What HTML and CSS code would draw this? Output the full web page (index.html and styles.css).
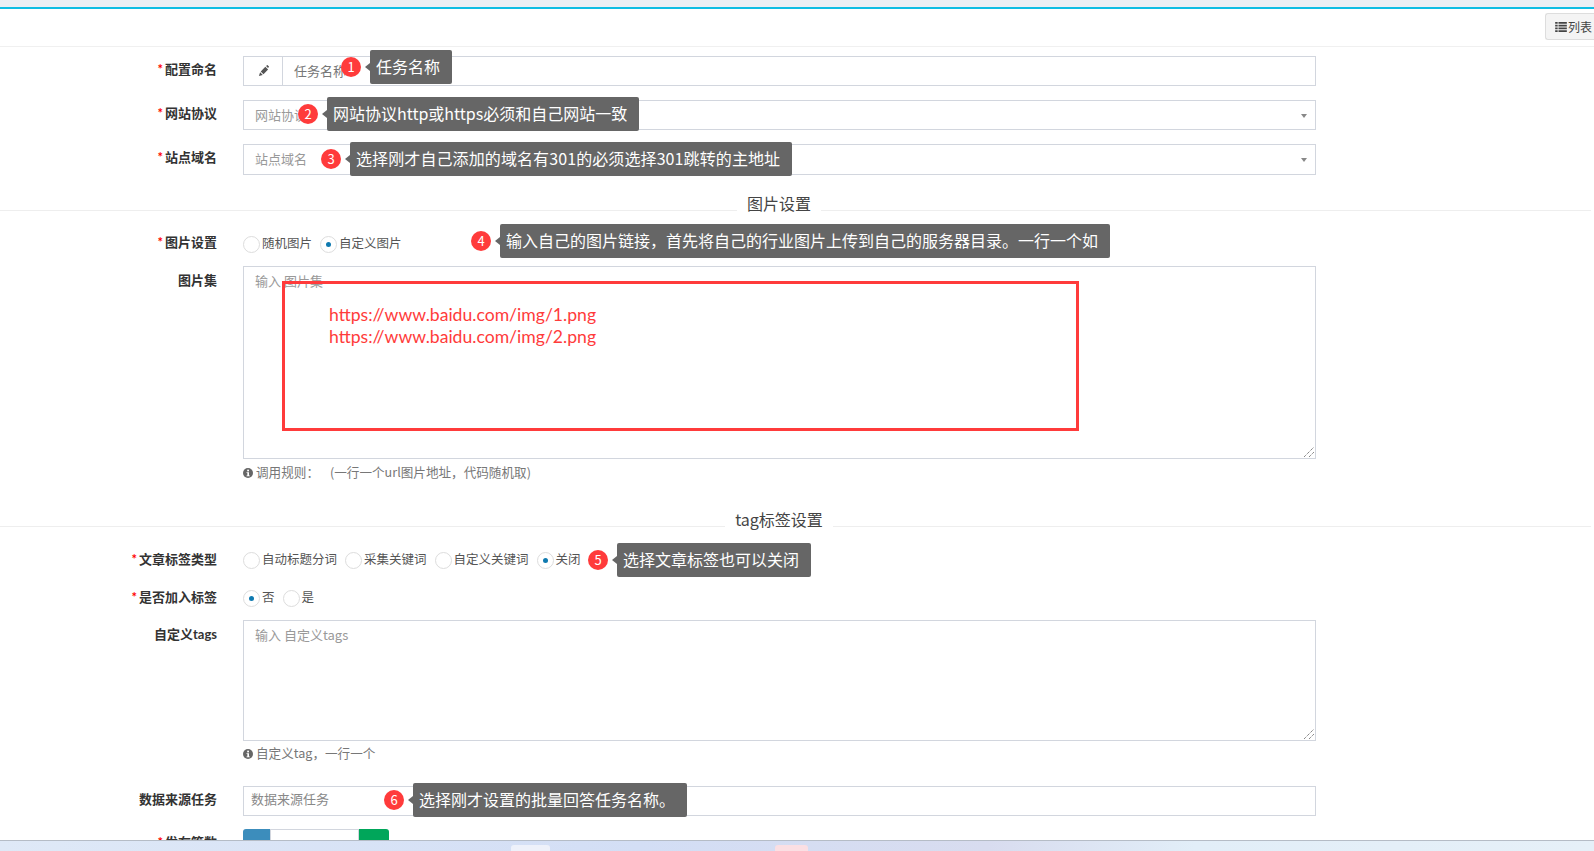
FILE: index.html
```html
<!DOCTYPE html>
<html lang="zh-CN">
  <head>
    <meta charset="UTF-8" />
    <title>任务配置</title>
    <link rel="stylesheet" href="styles.css">
  </head>
  <body>
    <div class="top-strip"></div>
    <div class="toolbar">
      <a class="btn-list">
        <svg class="ico" viewBox="0 0 14 12" width="12" height="10"><path d="M0 0h3v2H0zM4 0h10v2H4zM0 3.3h3v2H0zM4 3.3h10v2H4zM0 6.6h3v2H0zM4 6.6h10v2H4zM0 9.9h3v2H0zM4 9.9h10v2H4z" fill="#444"/></svg>列表
      </a>
    </div>

    <form class="form">
      <div class="row row-a">
        <label class="lbl"><i>*</i>配置命名</label>
        <div class="field input-group">
          <span class="addon">
            <svg viewBox="0 0 12 12" width="11" height="11"><path d="M3 7l5-5 3 3-5 5zM2.3 7.9l2.9 2.9L1 12zM8.8 1.2l1-1q.4-.3.8 0l1.3 1.3q.3.4 0 .8l-1 1z" fill="#555"/></svg>
          </span>
          <span class="ph dark">任务名称</span>
        </div>
        <div class="note note-1"><b class="num">1</b><span class="tip">任务名称</span></div>
      </div>

      <div class="row row-b">
        <label class="lbl"><i>*</i>网站协议</label>
        <div class="field select"><span class="ph">网站协议</span><s class="caret"></s></div>
        <div class="note note-2"><b class="num">2</b><span class="tip">网站协议http或https必须和自己网站一致</span></div>
      </div>

      <div class="row row-c">
        <label class="lbl"><i>*</i>站点域名</label>
        <div class="field select"><span class="ph">站点域名</span><s class="caret"></s></div>
        <div class="note note-3"><b class="num">3</b><span class="tip">选择刚才自己添加的域名有301的必须选择301跳转的主地址</span></div>
      </div>

      <div class="section sec-img"><span>图片设置</span></div>

      <div class="row row-radio">
        <label class="lbl"><i>*</i>图片设置</label>
        <div class="radios">
          <span class="radio"></span><span class="opt">随机图片</span>
          <span class="radio on"></span><span class="opt">自定义图片</span>
        </div>
        <div class="note note-4"><b class="num">4</b><span class="tip">输入自己的图片链接，首先将自己的行业图片上传到自己的服务器目录。一行一个如</span></div>
      </div>

      <div class="row row-area">
        <label class="lbl">图片集</label>
        <div class="stack">
          <div class="field area area-img">
            <span class="ph">输入 图片集</span>
            <span class="grip"><svg viewBox="0 0 10 10" width="10" height="10"><path d="M0 10L10 0M5 10l5-5" stroke="#555" stroke-dasharray="1 1" fill="none"/></svg></span>
          </div>
          <p class="help">
            <svg class="info" viewBox="0 0 12 12" width="10" height="10"><circle cx="6" cy="6" r="6" fill="#666"/><rect x="5" y="2" width="2.2" height="2" fill="#fff"/><path d="M4.2 5h3v4h1v1H4.2V9h1V6h-1z" fill="#fff"/></svg>调用规则：<span class="help-gap">(一行一个url图片地址，代码随机取)</span>
          </p>
        </div>
        <div class="redbox">
          <div>https://www.baidu.com/img/1.png</div>
          <div>https://www.baidu.com/img/2.png</div>
        </div>
      </div>

      <div class="section sec-tag"><span>tag标签设置</span></div>

      <div class="row row-radio2">
        <label class="lbl"><i>*</i>文章标签类型</label>
        <div class="radios">
          <span class="radio"></span><span class="opt">自动标题分词</span>
          <span class="radio"></span><span class="opt">采集关键词</span>
          <span class="radio"></span><span class="opt">自定义关键词</span>
          <span class="radio on"></span><span class="opt">关闭</span>
        </div>
        <div class="note note-5"><b class="num">5</b><span class="tip">选择文章标签也可以关闭</span></div>
      </div>

      <div class="row row-radio3">
        <label class="lbl"><i>*</i>是否加入标签</label>
        <div class="radios">
          <span class="radio on"></span><span class="opt">否</span>
          <span class="radio"></span><span class="opt">是</span>
        </div>
      </div>

      <div class="row row-area2">
        <label class="lbl">自定义tags</label>
        <div class="stack">
          <div class="field area area-tags">
            <span class="ph">输入 自定义tags</span>
            <span class="grip"><svg viewBox="0 0 10 10" width="10" height="10"><path d="M0 10L10 0M5 10l5-5" stroke="#555" stroke-dasharray="1 1" fill="none"/></svg></span>
          </div>
          <p class="help">
            <svg class="info" viewBox="0 0 12 12" width="10" height="10"><circle cx="6" cy="6" r="6" fill="#666"/><rect x="5" y="2" width="2.2" height="2" fill="#fff"/><path d="M4.2 5h3v4h1v1H4.2V9h1V6h-1z" fill="#fff"/></svg>自定义tag，一行一个
          </p>
        </div>
      </div>

      <div class="row row-d">
        <label class="lbl">数据来源任务</label>
        <div class="field plain"><span class="ph mid">数据来源任务</span></div>
        <div class="note note-6"><b class="num">6</b><span class="tip">选择刚才设置的批量回答任务名称。</span></div>
      </div>

      <div class="row row-e">
        <label class="lbl"><i>*</i>发布篇数</label>
        <div class="spinner"><span class="sp-l"></span><span class="sp-m"></span><span class="sp-r"></span></div>
      </div>
    </form>

    <div class="taskbar"><span class="tb-a"></span><span class="tb-b"></span></div>
  </body>
</html>
```

FILE: styles.css
```css
* {
  box-sizing: border-box;
}

html,
body {
  height: 851px;
  overflow: hidden;
}

body {
  margin: 0;
  position: relative;
  background: #fff;
  color: #333;
  font-family: "Noto Sans CJK SC", "Noto Sans", sans-serif;
  font-size: 13px;
}

.top-strip {
  height: 9px;
  background: #eceff4;
  border-bottom: 2px solid #10bde3;
}

.toolbar {
  height: 38px;
  display: flex;
  justify-content: flex-end;
  padding-top: 4px;
  border-bottom: 1px solid #f0f0f0;
}

.btn-list {
  width: 49px;
  height: 27px;
  display: flex;
  align-items: center;
  gap: 1px;
  padding-left: 9px;
  background: #f4f4f4;
  border: 1px solid #ddd;
  border-right: none;
  border-radius: 3px 0 0 3px;
  color: #444;
  font-size: 12px;
  white-space: nowrap;
}

/* form rows */
.form {
  padding-top: 9px;
}

.row {
  display: flex;
  position: relative;
  align-items: flex-start;
}

.lbl {
  width: 217px;
  margin-right: 26px;
  flex: none;
  text-align: right;
  font-family: Lato, "Noto Sans CJK SC", sans-serif;
  font-weight: 700;
  color: #333;
  line-height: 26px;
}

.lbl i {
  color: #f00;
  font-style: normal;
  margin-right: 2px;
}

.field {
  width: 1073px;
  height: 30px;
  position: relative;
  display: flex;
  align-items: center;
  border: 1px solid #d2d6de;
  background: #fff;
}

.ph {
  padding-left: 11px;
  padding-bottom: 2px;
  color: #999;
  white-space: nowrap;
}

.ph.dark {
  color: #777;
}

.ph.mid {
  padding-left: 7px;
  padding-bottom: 5px;
  color: #888;
}

.addon {
  width: 39px;
  height: 100%;
  padding-bottom: 2px;
  display: flex;
  align-items: center;
  justify-content: center;
  border-right: 1px solid #d2d6de;
}

.caret {
  position: absolute;
  right: 8px;
  top: 13px;
  border-top: 4px solid #888;
  border-left: 3px solid transparent;
  border-right: 3px solid transparent;
}

.row-a,
.row-b {
  height: 44px;
}

.row-c {
  height: 31px;
}

.row-c .field {
  height: 31px;
}

/* section titles */
.section {
  height: 1px;
  margin-right: 3px;
  padding-right: 33px;
  background: #eee;
  display: flex;
  justify-content: center;
  align-items: flex-start;
}

.section span {
  flex: none;
  height: 24px;
  margin-top: -19px;
  padding: 0 10px;
  background: #fff;
  line-height: 24px;
  font-size: 16px;
  color: #444;
}

.sec-img {
  margin-top: 35px;
  margin-bottom: 18px;
}

.sec-tag {
  margin-bottom: 21px;
}

/* radios */
.radios {
  display: flex;
  align-items: center;
  height: 24px;
}

.radio {
  width: 17px;
  height: 17px;
  margin-top: 3px;
  flex: none;
  border: 1px solid #ddd;
  border-radius: 50%;
  background: #fff;
  position: relative;
}

.radio.on::after {
  content: "";
  position: absolute;
  left: 5px;
  top: 5px;
  width: 5px;
  height: 5px;
  border-radius: 50%;
  background: #0f7ab0;
}

.opt {
  margin: 0 8px 0 2px;
  padding-bottom: 2px;
  color: #555;
  font-size: 12.5px;
  white-space: nowrap;
}

.row-radio {
  height: 37px;
  padding-top: 2px;
}

.row-radio .lbl,
.row-radio2 .lbl,
.row-radio3 .lbl {
  line-height: 22px;
}

.row-radio2 .radios,
.row-radio3 .radios {
  margin-top: -1px;
}

.row-area .lbl,
.row-area2 .lbl {
  padding-top: 1px;
}

.stack {
  display: flex;
  flex-direction: column;
}

.area {
  align-items: flex-start;
  padding-top: 4px;
  line-height: 20px;
}

.area .ph {
  padding-bottom: 0;
}

.area-img {
  height: 193px;
}

.area-tags {
  height: 121px;
}

.grip {
  position: absolute;
  right: 1px;
  bottom: 1px;
  width: 10px;
  height: 10px;
  display: flex;
}

.help {
  margin: 4px 0 0;
  line-height: 17px;
  color: #777;
  font-size: 12.6px;
  white-space: nowrap;
}

.area-tags + .help {
  margin-top: 3px;
}

.help-gap {
  margin-left: 11px;
}

.info {
  margin-right: 3px;
  vertical-align: -1px;
}

.row-area {
  height: 260px;
}

.row-radio2 {
  height: 38px;
}

.row-radio3 {
  height: 34px;
}

.row-area2 {
  height: 166px;
}

.row-d {
  height: 43px;
}

.plain {
  height: 30px;
}

.spinner {
  display: flex;
  width: 146px;
  height: 30px;
}

.sp-l {
  width: 27px;
  background: #3c8dbc;
  border-radius: 3px 0 0 3px;
}

.sp-m {
  width: 89px;
  border: 1px solid #d2d6de;
}

.sp-r {
  width: 30px;
  background: #00a65a;
  border-radius: 0 3px 3px 0;
}

/* numbered notes laid over the form */
.note {
  position: absolute;
  display: flex;
  align-items: center;
  z-index: 2;
}

.note-1 {
  left: 341px;
  top: -6px;
}

.note-2 {
  left: 298px;
  top: -3px;
}

.note-3 {
  left: 321px;
  top: -2px;
}

.note-3 .tip {
  letter-spacing: 0.1px;
}

.note-4 {
  left: 471px;
  top: -5px;
}

.note-5 {
  left: 588px;
  top: -5px;
}

.note-6 {
  left: 384px;
  top: -3px;
}

.num {
  width: 20px;
  height: 20px;
  border-radius: 50%;
  background: #ff3b3b;
  color: #fff;
  font-weight: 400;
  font-size: 13px;
  line-height: 20px;
  text-align: center;
}

.tip {
  position: relative;
  margin-left: 9px;
  height: 34px;
  padding: 0 12px 2px 6px;
  display: flex;
  align-items: center;
  background: #666;
  color: #fff;
  font-size: 16px;
  border-radius: 2px;
  white-space: nowrap;
}

.tip::before {
  content: "";
  position: absolute;
  left: -5px;
  top: 13px;
  border-right: 5px solid #666;
  border-top: 4px solid transparent;
  border-bottom: 4px solid transparent;
}

.redbox {
  position: absolute;
  left: 282px;
  top: 15px;
  width: 797px;
  height: 150px;
  padding: 20px 0 0 44px;
  border: 3px solid #ff3b3b;
  color: #ff3b3b;
  font-family: Lato, "Noto Sans CJK SC", sans-serif;
  font-size: 17.6px;
  line-height: 22px;
}

/* desktop taskbar showing at the bottom edge */
.taskbar {
  position: absolute;
  left: 0;
  right: 0;
  bottom: 0;
  height: 11px;
  background: linear-gradient(90deg, #dfe9f7 0%, #d3def5 40%, #d8dcef 62%, #e2eef8 75%, #e6f0f8 100%);
  border-top: 1px solid #b5bcc6;
  z-index: 3;
}

.tb-a,
.tb-b {
  position: absolute;
  top: 4px;
  bottom: 0;
}

.tb-a {
  left: 511px;
  width: 39px;
  background: #eef1fa;
  border-radius: 3px 3px 0 0;
}

.tb-b {
  left: 775px;
  width: 33px;
  background: #fbdfe3;
  border-radius: 3px 3px 0 0;
}
```
